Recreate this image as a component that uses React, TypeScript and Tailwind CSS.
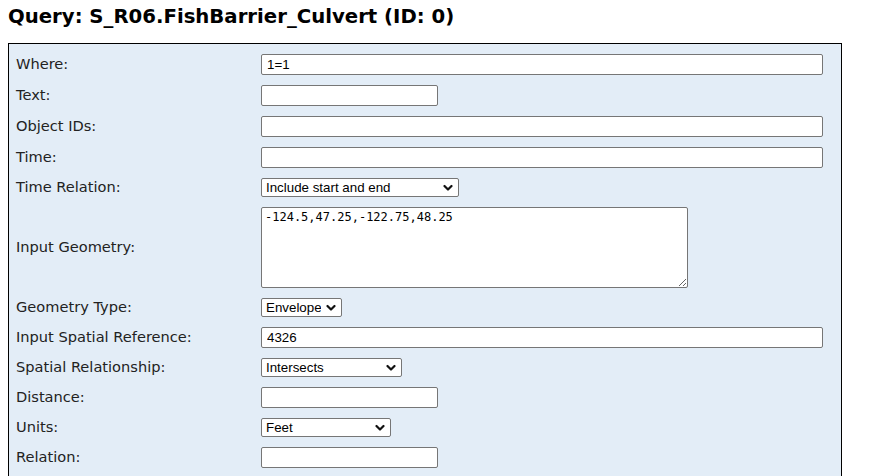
import React from 'react';

type Field =
  | { label: string; kind: 'input'; width: string; value?: string }
  | { label: string; kind: 'select'; width: string; value: string }
  | { label: string; kind: 'textarea'; value: string };

const fields: Field[] = [
  { label: 'Where:', kind: 'input', width: 'w-[562px]', value: '1=1' },
  { label: 'Text:', kind: 'input', width: 'w-[177px]' },
  { label: 'Object IDs:', kind: 'input', width: 'w-[562px]' },
  { label: 'Time:', kind: 'input', width: 'w-[562px]' },
  { label: 'Time Relation:', kind: 'select', width: 'w-[198px]', value: 'Include start and end' },
  { label: 'Input Geometry:', kind: 'textarea', value: '-124.5,47.25,-122.75,48.25' },
  { label: 'Geometry Type:', kind: 'select', width: 'w-[81px]', value: 'Envelope' },
  { label: 'Input Spatial Reference:', kind: 'input', width: 'w-[562px]', value: '4326' },
  { label: 'Spatial Relationship:', kind: 'select', width: 'w-[141px]', value: 'Intersects' },
  { label: 'Distance:', kind: 'input', width: 'w-[177px]' },
  { label: 'Units:', kind: 'select', width: 'w-[130px]', value: 'Feet' },
  { label: 'Relation:', kind: 'input', width: 'w-[177px]' },
];

function Chevron() {
  return (
    <svg width="10" height="7" viewBox="0 0 10 7" className="absolute right-[6px] top-1/2 -translate-y-1/2 pointer-events-none">
      <path d="M1.5 1.5 L5 5 L8.5 1.5" fill="none" stroke="#111" strokeWidth="2.2" strokeLinecap="round" strokeLinejoin="round" />
    </svg>
  );
}

function Control({ field }: { field: Field }) {
  if (field.kind === 'input') {
    return (
      <input
        type="text"
        defaultValue={field.value ?? ''}
        className={`${field.width} h-[21px] bg-white border border-[#767676] rounded-[2px] px-[5px] text-[13.33px] text-black font-['Liberation_Sans',Arial,sans-serif] outline-none`}
      />
    );
  }
  if (field.kind === 'select') {
    return (
      <div className={`relative ${field.width} h-[19px]`}>
        <select
          defaultValue={field.value}
          className="block appearance-none w-full h-full bg-white border border-[#767676] rounded-[2px] pl-[4px] pr-5 py-0 text-[13.33px] leading-[16px] text-black font-['Liberation_Sans',Arial,sans-serif] outline-none"
        >
          <option>{field.value}</option>
        </select>
        <Chevron />
      </div>
    );
  }
  return (
    <textarea
      defaultValue={field.value}
      className="block w-[427px] h-[81px] bg-white border border-[#767676] rounded-[2px] px-[3px] py-[2px] text-[12px] leading-[15px] text-black font-['DejaVu_Sans_Mono',monospace] outline-none resize"
    />
  );
}

export default function App() {
  return (
    <div className="min-h-screen bg-white px-2 font-['DejaVu_Sans',Verdana,sans-serif] text-[#222]">
      <h2 className="pt-[5px] pb-[14px] text-[19.7px] leading-[24px] font-bold text-black">
        Query: S_R06.FishBarrier_Culvert (ID: 0)
      </h2>

      <div className="w-[834px] border border-black bg-[#e3edf7] py-[5px]">
        {fields.map((f) => (
          <div key={f.label} className="flex items-center py-[5px]">
            <div className="relative -top-[1px] w-[252px] pl-[7px] text-[14.6px] leading-[18px] text-[#222]">{f.label}</div>
            <Control field={f} />
          </div>
        ))}
      </div>
    </div>
  );
}
